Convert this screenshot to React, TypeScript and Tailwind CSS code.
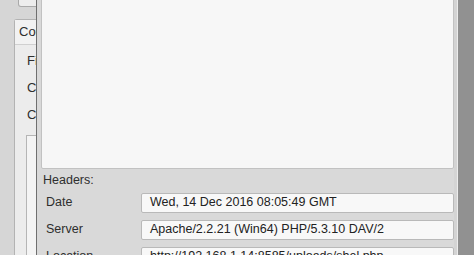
import React from 'react';

// Fila de cabecera HTTP: etiqueta + campo de solo lectura
const HeaderRow: React.FC<{ label: string; value: string }> = ({ label, value }) => (
  <div className="flex items-center h-[27px]">
    <span className="w-[100px] pl-[5px] text-[12.5px] text-[#2e2e2e]">{label}</span>
    <div className="flex-1 h-[20px] flex items-center px-[8px] bg-[#f8f8f8] border border-[#b9b9b9] rounded-[2px] text-[12.5px] text-[#222] whitespace-nowrap overflow-hidden">
      {value}
    </div>
  </div>
);

export default function App() {
  const headers = [
    { label: 'Date', value: 'Wed, 14 Dec 2016 08:05:49 GMT' },
    { label: 'Server', value: 'Apache/2.2.21 (Win64) PHP/5.3.10 DAV/2' },
    { label: 'Location', value: 'http://192.168.1.14:8585/uploads/shel.php' },
  ];

  return (
    <div
      className="w-[474px] h-[255px] flex overflow-hidden bg-[#d6d6d6]"
      style={{ fontFamily: '"Liberation Sans", Arial, sans-serif' }}
    >
      {/* Ventana de fondo (parcialmente tapada) */}
      <div className="w-[36px] shrink-0 flex flex-col overflow-hidden">
        <div className="ml-[18px] h-[7px] w-[30px] bg-[#ededed] border border-t-0 border-[#a9a9a9] rounded-b-[3px]" />
        <div className="ml-[14px] mt-[12px] flex-1 w-[40px] bg-[#ececec] border-l border-t border-[#b3b3b3] rounded-tl-[3px] flex flex-col">
          <div className="h-[25px] flex items-center pl-[4px] text-[13px] text-[#2e2e2e] bg-[#f2f2f2] border-b border-[#d0d0d0]">Con</div>
          <div className="pl-[12px] text-[13px] text-[#2e2e2e] flex flex-col">
            <span className="h-[27px] leading-[27px] mt-[2px]">File</span>
            <span className="h-[27px] leading-[27px]">Co</span>
            <span className="h-[27px] leading-[27px]">Co</span>
          </div>
          <div className="ml-[11px] mt-[7px] flex-1 bg-[#f4f4f4] border-l border-t border-[#b5b5b5]" />
        </div>
      </div>

      {/* Diálogo en primer plano */}
      <div className="flex-1 flex border-l border-[#6f6f6f] bg-[#d9d9d9]">
        <div className="flex-1 flex flex-col pl-[4px] min-w-0">
          <div className="h-[170px] shrink-0 -mt-[1px] bg-[#f7f7f7] border border-[#c2c2c2] rounded-b-[2px]" />
          <div className="pl-[2px] mt-[2px] h-[19px] leading-[19px] text-[12.5px] text-[#2e2e2e]">Headers:</div>
          <div className="flex flex-col -mt-[1px]">
            {headers.map((h) => (
              <HeaderRow key={h.label} label={h.label} value={h.value} />
            ))}
          </div>
        </div>
        {/* Barra lateral derecha */}
        <div className="w-[20px] shrink-0 flex">
          <div className="w-[3px] bg-[#d4d4d4]" />
          <div className="w-[1px] bg-[#ececec]" />
          <div className="flex-1 bg-[#919191]" />
        </div>
      </div>
    </div>
  );
}
